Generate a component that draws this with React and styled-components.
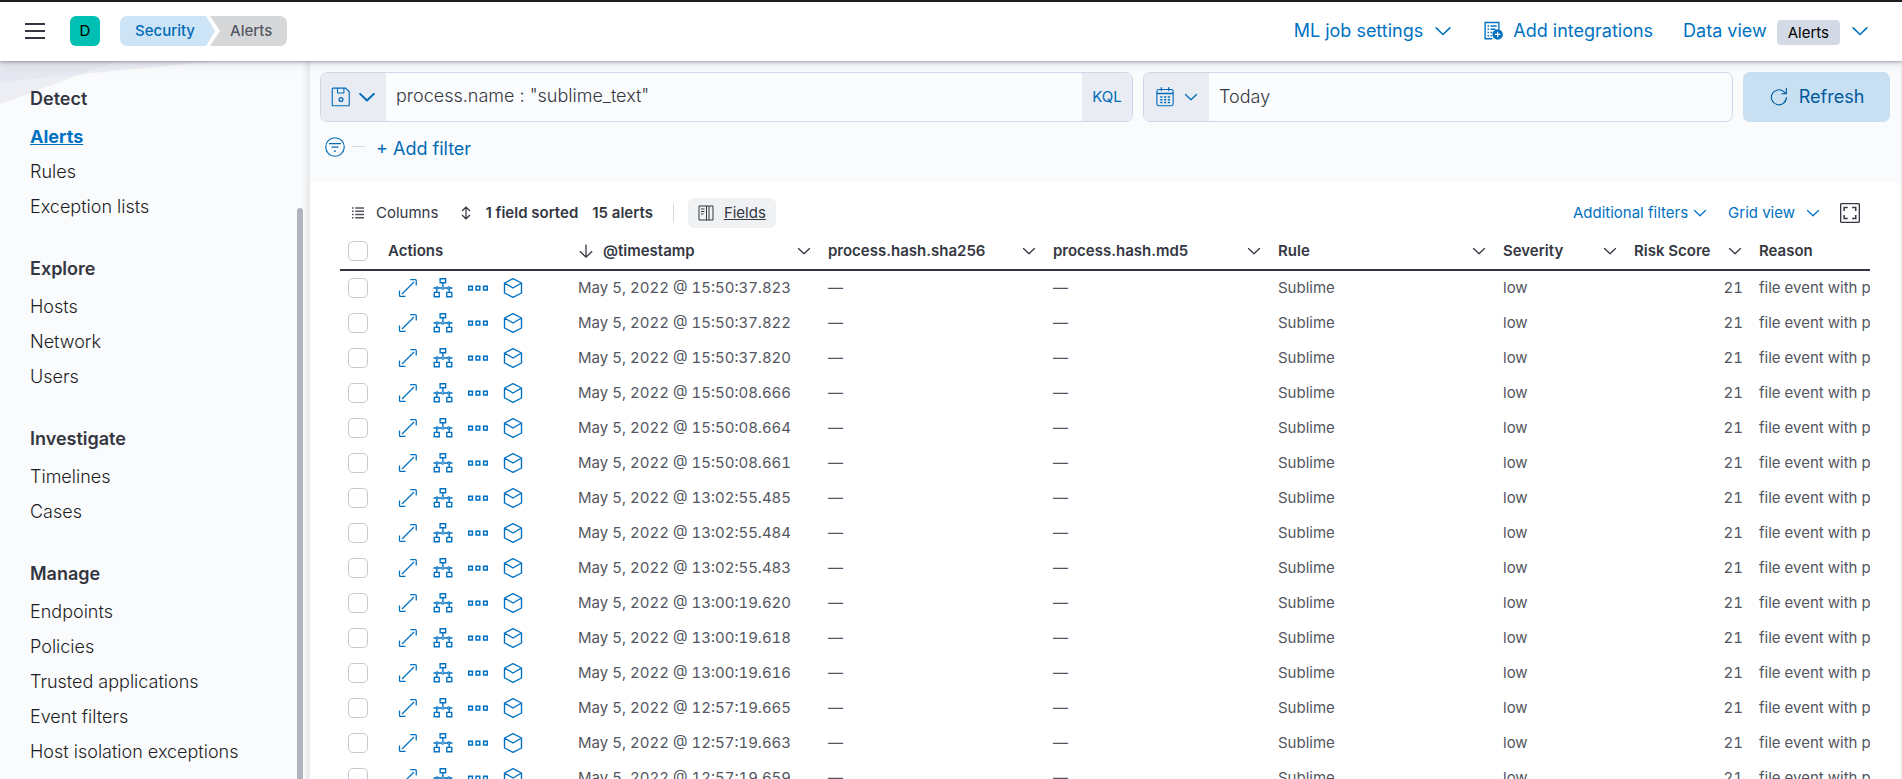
import React from "react";
import styled, { createGlobalStyle, css } from "styled-components";

const c = {
  text: "#343741",
  title: "#343741",
  soft: "#53565f",
  primary: "#0071c2",
  link: "#006bb8",
  pale: "#fafbfd",
  append: "#e9edf3",
  line: "#d3dae6",
};

const Global = createGlobalStyle`
  *, *::before, *::after { box-sizing: border-box; }
  body {
    margin: 0;
    background: #fff;
    color: ${c.text};
    font-family: Inter, "Liberation Sans", sans-serif;
    font-size: 15px;
    line-height: 20px;
  }
  button, input { font: inherit; color: inherit; margin: 0; padding: 0; border: 0; background: none; }
  button { cursor: pointer; }
  svg { display: block; flex: none; }
`;

/* ---------- icons ---------- */

const Svg = ({ size = 20, children, ...rest }) => (
  <svg width={size} height={size} viewBox="0 0 16 16" fill="none" stroke="currentColor" aria-hidden="true" {...rest}>
    {children}
  </svg>
);
const Chevron = ({ size = 20, bold }) => (
  <Svg size={size} strokeLinecap="round" strokeLinejoin="round" strokeWidth={bold ? 1.6 : 1.25}><path d="M2.5 5.5 8 10.8l5.500-5.300" /></Svg>
);
const SaveIcon = () => (
  <Svg><path d="M1.500.900h10.200l2.900 2.900v10.700a.5.5 0 0 1-.5.5H1.500a.5.5 0 0 1-.5-.5V1.400a.5.5 0 0 1 .5-.5ZM5.200 1v3.300a.5.5 0 0 0 .5.5h4.100a.5.5 0 0 0 .5-.5V1" strokeWidth=".9" /><circle cx="8" cy="10" r="1.500" strokeWidth="1.100" /></Svg>
);
const CalendarIcon = () => (
  <Svg>
    <rect x="1.500" y="2" width="13" height="13" rx="1.500" strokeWidth=".9" />
    <path d="M1.500 5.200h13" strokeWidth="1.100" />
    <path d="M5 .2v3M11 .2v3" />
    <path d="M4.200 8h7.800M4.200 10.200h7.800M4.200 12.400h7.800" strokeWidth="1.200" strokeDasharray="1.800 1.200" />
  </Svg>
);
const RefreshIcon = () => (
  <Svg strokeLinecap="round"><path d="M13.900 8.500A6 6 0 1 1 11.800 3.700L13.600 5.300M13.900 1v4.400H10.300" strokeWidth=".9" /></Svg>
);
const FilterIcon = () => (
  <Svg><circle cx="8" cy="8" r="7.400" strokeWidth=".9" /><path d="M3.200 5.300h9.600M5.200 8.100h5.600M7.200 11.200h1.600" strokeWidth="1" /></Svg>
);
const IntegrationIcon = () => (
  <Svg>
    <path d="M7.500 14.200H1.700V1.200h11V7" strokeWidth="1.100" />
    <path d="M3.600 4h1.200M6 4h5M3.600 6.600h1.200M6 6.600h4M3.600 9.200h1.200M3.600 11.800h1.200M6 9.200h1.400M6 11.800h1" strokeWidth="1.100" />
    <circle cx="11.700" cy="10.700" r="4.200" fill="currentColor" stroke="none" />
    <path d="M11.700 8.500v4.400M9.500 10.700h4.400" stroke="#fff" strokeWidth="1" />
  </Svg>
);
const ListIcon = () => (
  <Svg size={16}><path d="M2 3h1.600M2 6.200h1.600M2 9.500h1.600M2 12.700h1.600M5.200 3H14M5.200 6.200H14M5.200 9.500H14M5.200 12.700H14" strokeWidth="1.400" opacity=".85" /></Svg>
);
const SortIcon = () => (
  <Svg size={16}><path d="M8 2.500v11M4 6 8 2.200 12 6M4 10l4 3.800 4-3.800" strokeWidth="1.200" /></Svg>
);
const FieldsIcon = () => (
  <Svg size={16}><path d="M1 1h14v14H1zM8.500 1v14M11 1v14M3 4h3.500M3 6.500h3.500M3 9h2.500" strokeWidth="1" /></Svg>
);
const FullScreenIcon = () => (
  <Svg><rect x=".5" y=".5" width="15" height="15" rx="1" strokeWidth="1.100" /><path d="M3.300 6.300V3.600h2.900M9.700 3.600h2.900v2.700M12.600 9.600v2.700H9.700M6.200 12.300H3.300V9.600" strokeWidth="1.200" /></Svg>
);
const ArrowDown = () => (
  <Svg size={16}><path d="M8 1.500v12.500M1.800 8.300 8 14.200l6.200-5.900" strokeWidth="1.300" /></Svg>
);
const ExpandIcon = () => (
  <Svg><path d="M3.200 12.800 12.800 3.200M9.800 1.300h4.100a.7.7 0 0 1 .7.700v4M1.200 10v4a.7.7 0 0 0 .7.700H6" strokeWidth="1" /></Svg>
);
const AnalyzeIcon = () => (
  <Svg>
    <path d="M5.700.600h4.400v3.200H5.700zM1 11.500h4v3.500H1zM11 11.500h4v3.500h-4zM7.900 3.800v3M.4 8h1.900M4.100 8h2.600M9.100 8h2.600M13.500 8h2.100M3 9v2.500M13 9v2.500" strokeWidth="1.100" />
    <circle cx="3.200" cy="8" r=".9" strokeWidth=".9" /><circle cx="7.900" cy="8" r="1" strokeWidth=".9" /><circle cx="12.600" cy="8" r=".9" strokeWidth=".9" />
  </Svg>
);
const DotsIcon = () => (
  <Svg><path d="M.6 6.500h2.900v3.100H.6zM6.500 6.500h2.900v3.100H6.500zM12.500 6.500h2.900v3.100h-2.900z" strokeWidth="1.200" /></Svg>
);
const CubeIcon = () => (
  <Svg strokeLinejoin="round"><path d="M8 .5 14.800 4v8L8 15.500 1.200 12V4ZM1.200 4 8 8l6.800-4" strokeWidth="1.100" /></Svg>
);

/* ---------- shell ---------- */

const Page = styled.div`
  height: 100vh;
  min-width: 1200px;
  display: flex;
  flex-direction: column;
  overflow: hidden;
  border-top: 2px solid #1d1e24;
`;
const Header = styled.header`
  position: relative;
  z-index: 2;
  flex: none;
  height: 59px;
  padding: 0 32px 1px 25px;
  display: flex;
  align-items: center;
  justify-content: space-between;
  background: #fff;
  box-shadow: 0 1px 3px rgba(80, 85, 110, 0.5), 0 3px 10px rgba(60, 60, 60, 0.13);
`;
const HeaderSide = styled.div`
  display: flex;
  align-items: center;
`;
const MenuButton = styled.button`
  width: 20px;
  height: 16px;
  margin-right: 25px;
  display: flex;
  flex-direction: column;
  justify-content: space-between;
`;
const MenuBar = styled.span`
  width: 100%;
  height: 2px;
  background: ${c.text};
`;
const Space = styled.button`
  width: 30px;
  height: 30px;
  margin-right: 20px;
  border-radius: 6px;
  background: #00bfb3;
  color: #000;
`;
const Crumbs = styled.nav`
  display: flex;
`;
const Crumb = styled.a`
  height: 30px;
  line-height: 30px;
  text-decoration: none;
  font-weight: 500;
  ${(p) => p.$last ? css`
    margin-left: -5px;
    padding: 0 15px 0 20px;
    border-radius: 0 7px 7px 0;
    background: #d6d7d9;
    color: #535764;
    clip-path: polygon(0 0, 100% 0, 100% 100%, 0 100%, 10px 50%);
  ` : css`
    padding: 0 20px 0 15px;
    border-radius: 7px 0 0 7px;
    background: #cce4f5;
    color: ${c.link};
    clip-path: polygon(0 0, calc(100% - 9px) 0, 100% 50%, calc(100% - 9px) 100%, 0 100%);
  `}
`;
const HeaderAction = styled.button`
  display: flex;
  align-items: center;
  gap: 10px;
  margin-left: 30px;
  color: ${c.primary};
  font-size: 18px;
  line-height: 24px;
`;
const Badge = styled.span`
  height: 25px;
  margin-top: 2px;
  padding: 0 11px;
  border-radius: 4px;
  background: ${c.line};
  color: #000;
  font-size: 15px;
  line-height: 25px;
`;
const Body = styled.div`
  flex: 1;
  min-height: 0;
  display: flex;
  border-right: 2px solid #f1f2f4;
`;

/* ---------- side navigation ---------- */

const Side = styled.aside`
  position: relative;
  flex: none;
  width: 310px;
  padding: 20px 30px 0;
  overflow: hidden;
  background: linear-gradient(90deg, transparent 302px, #e6e8ea 310px), ${c.pale};
`;
const Backdrop = styled.svg`
  position: absolute;
  top: 0;
  left: 0;
`;
const Thumb = styled.div`
  position: absolute;
  top: 147px;
  bottom: 0;
  right: 7px;
  width: 6px;
  border-radius: 3px 3px 0 0;
  background: #b0b3be;
`;
const Group = styled.section`
  position: relative;
  margin-bottom: 27px;
`;
const GroupTitle = styled.h2`
  margin: 0 0 3px;
  font-size: 18px;
  font-weight: 600;
  line-height: 35px;
  color: ${c.title};
`;
const NavLink = styled.a`
  display: block;
  font-size: 18px;
  line-height: 35px;
  font-weight: ${(p) => (p.$active ? 700 : 300)};
  color: ${(p) => (p.$active ? c.primary : "#1d1e24")};
  text-decoration: ${(p) => (p.$active ? "underline" : "none")};
`;

/* ---------- query area ---------- */

const Main = styled.main`
  flex: 1;
  min-width: 0;
  overflow: hidden;
`;
const Query = styled.section`
  height: 121px;
  padding: 11px 10px 0;
  background: ${c.pale};
`;
const QueryRow = styled.div`
  display: flex;
  gap: 10px;
  height: 50px;
`;
const Field = styled.div`
  display: flex;
  flex: ${(p) => (p.$wide ? "1" : "0 0 590px")};
  min-width: 0;
  border: 1px solid #cfd7e8;
  border-radius: 7px;
  overflow: hidden;
  background: #fbfcfe;
`;
const FieldButton = styled.button`
  flex: none;
  width: ${(p) => p.$w}px;
  display: flex;
  align-items: center;
  justify-content: center;
  gap: ${(p) => p.$gap || 6}px;
  background: ${c.append};
  color: ${c.link};
`;
const QueryInput = styled.input`
  flex: 1;
  min-width: 0;
  padding: 0 10px 2px;
  font-size: 18px;
  font-weight: 300;
  outline: 0;
`;
const DateButton = styled.button`
  flex: 1;
  padding: 0 10px;
  text-align: left;
  font-size: 18px;
  font-weight: 300;
`;
const Refresh = styled.button`
  width: 147px;
  display: flex;
  align-items: center;
  justify-content: center;
  gap: 10px;
  border-radius: 7px;
  background: #c8e0f2;
  color: #005a9e;
  font-size: 18px;
`;
const FilterRow = styled.div`
  display: flex;
  align-items: flex-start;
  padding: 15px 5px 0;
  color: ${c.link};
`;
const Dash = styled.span`
  width: 13px;
  height: 1px;
  margin: 9px 11px 0 7px;
  background: ${c.line};
`;
const AddFilter = styled.button`
  font-size: 18px;
  line-height: 24px;
`;

/* ---------- alerts grid ---------- */

const Grid = styled.section`
  padding: 16px 30px 0;
`;
const Toolbar = styled.div`
  height: 30px;
  padding: 0 10px;
  display: flex;
  align-items: center;
  justify-content: space-between;
`;
const Tools = styled.div`
  display: flex;
  align-items: center;
`;
const Tool = styled.button`
  height: 30px;
  display: flex;
  align-items: center;
  gap: ${(p) => p.$gap || 10}px;
  margin-right: ${(p) => p.$after || 0}px;
  padding: 0 ${(p) => (p.$filled ? 10 : 0)}px;
  border-radius: 6px;
  background: ${(p) => (p.$filled ? "#f0f1f3" : "none")};
  color: ${(p) => (p.$blue ? c.primary : c.text)};
  font-weight: ${(p) => p.$weight || 400};
  text-decoration: ${(p) => (p.$filled ? "underline" : "none")};
`;
const Count = styled.strong`
  font-weight: 600;
`;
const Divider = styled.span`
  width: 1px;
  height: 19px;
  margin: 0 14px 0 20px;
  background: ${c.line};
`;
const Table = styled.table`
  width: 100%;
  table-layout: fixed;
  border-collapse: separate;
  border-spacing: 0;
`;
const Th = styled.th`
  height: 43px;
  width: ${(p) => (p.$w ? `${p.$w}px` : "auto")};
  padding: 4px 8px 0;
  border-bottom: 2px solid #343741;
  color: ${c.title};
  font-weight: 600;
  text-align: left;
`;
const HeadCell = styled.div`
  display: flex;
  align-items: center;
  justify-content: space-between;
`;
const HeadLabel = styled.span`
  display: flex;
  align-items: center;
  gap: 9px;
`;
const Td = styled.td`
  height: 35px;
  padding: 0 8px 1px;
  overflow: hidden;
  white-space: nowrap;
  text-overflow: clip;
  color: ${c.soft};
  text-align: ${(p) => (p.$right ? "right" : "left")};
  font-variant-numeric: tabular-nums;
`;
const Check = styled.input.attrs({ type: "checkbox" })`
  appearance: none;
  display: block;
  width: 20px;
  height: 20px;
  border: 1px solid #c5c8cf;
  border-radius: 5px;
  background: #fff;
`;
const Actions = styled.div`
  display: flex;
  gap: 15px;
  padding-left: 10px;
`;
const Action = styled.button`
  color: ${c.primary};
`;

const groups = [
  ["Detect", ["Alerts", "Rules", "Exception lists"]],
  ["Explore", ["Hosts", "Network", "Users"]],
  ["Investigate", ["Timelines", "Cases"]],
  ["Manage", ["Endpoints", "Policies", "Trusted applications", "Event filters", "Host isolation exceptions"]],
];
const columns = [
  ["@timestamp", 250], ["process.hash.sha256", 225], ["process.hash.md5", 225],
  ["Rule", 225], ["Severity", 131], ["Risk Score", 125], ["Reason", 0],
];
const times = [
  "15:50:37.823", "15:50:37.822", "15:50:37.820", "15:50:08.666", "15:50:08.664",
  "15:50:08.661", "13:02:55.485", "13:02:55.484", "13:02:55.483", "13:00:19.620",
  "13:00:19.618", "13:00:19.616", "12:57:19.665", "12:57:19.663", "12:57:19.659",
];
const actions = [["View details", ExpandIcon], ["Analyze event", AnalyzeIcon], ["More actions", DotsIcon], ["Session view", CubeIcon]];

export default function App() {
  return (
    <Page>
      <Global />
      <Header>
        <HeaderSide>
          <MenuButton aria-label="Toggle navigation"><MenuBar /><MenuBar /><MenuBar /></MenuButton>
          <Space aria-label="Default space">D</Space>
          <Crumbs aria-label="Breadcrumb">
            <Crumb href="#security">Security</Crumb>
            <Crumb href="#alerts" $last>Alerts</Crumb>
          </Crumbs>
        </HeaderSide>
        <HeaderSide>
          <HeaderAction>ML job settings <Chevron /></HeaderAction>
          <HeaderAction><IntegrationIcon /> Add integrations</HeaderAction>
          <HeaderAction>Data view <Badge>Alerts</Badge> <Chevron /></HeaderAction>
        </HeaderSide>
      </Header>
      <Body>
        <Side>
          <Backdrop width="216" height="44" viewBox="0 0 216 44" aria-hidden="true">
            <path d="M0 0h117L0 43Z" fill="#dfe2ec" fillOpacity=".5" />
            <path d="M0 0h215L0 21Z" fill="#dfe2ee" fillOpacity=".5" />
          </Backdrop>
          {groups.map(([title, items]) => (
            <Group key={title}>
              <GroupTitle>{title}</GroupTitle>
              {items.map((item) => (
                <NavLink key={item} href="#nav" $active={item === "Alerts"}>{item}</NavLink>
              ))}
            </Group>
          ))}
          <Thumb />
        </Side>
        <Main>
          <Query>
            <QueryRow>
              <Field $wide>
                <FieldButton $w={65} aria-label="Saved queries"><SaveIcon /><Chevron bold /></FieldButton>
                <QueryInput aria-label="Search query" defaultValue={'process.name : "sublime_text"'} />
                <FieldButton $w={50}>KQL</FieldButton>
              </Field>
              <Field>
                <FieldButton $w={65} $gap={8} aria-label="Quick date select"><CalendarIcon /><Chevron size={16} /></FieldButton>
                <DateButton>Today</DateButton>
              </Field>
              <Refresh><RefreshIcon /> Refresh</Refresh>
            </QueryRow>
            <FilterRow>
              <FilterIcon />
              <Dash />
              <AddFilter>+ Add filter</AddFilter>
            </FilterRow>
          </Query>
          <Grid>
            <Toolbar>
              <Tools>
                <Tool $after={20}><ListIcon /> Columns</Tool>
                <Tool $after={14} $gap={11} $weight={600}><SortIcon /> 1 field sorted</Tool>
                <Count>15 alerts</Count>
                <Divider />
                <Tool $filled><FieldsIcon /> Fields</Tool>
              </Tools>
              <Tools>
                <Tool $blue $gap={4} $after={20}>Additional filters <Chevron size={16} /></Tool>
                <Tool $blue $after={19}>Grid view <Chevron size={16} /></Tool>
                <Tool aria-label="Full screen"><FullScreenIcon /></Tool>
              </Tools>
            </Toolbar>
            <Table>
              <thead>
                <tr>
                  <Th $w={40}><Check aria-label="Select all alerts" /></Th>
                  <Th $w={190}>Actions</Th>
                  {columns.map(([name, width], i) => (
                    <Th key={name} $w={width}>
                      <HeadCell>
                        <HeadLabel>{i === 0 && <ArrowDown />}{name}</HeadLabel>
                        {width > 0 && <Chevron size={16} />}
                      </HeadCell>
                    </Th>
                  ))}
                </tr>
              </thead>
              <tbody>
                {times.map((time) => (
                  <tr key={time}>
                    <Td><Check aria-label={`Select alert ${time}`} /></Td>
                    <Td>
                      <Actions>
                        {actions.map(([label, Icon]) => (
                          <Action key={label} aria-label={label}><Icon /></Action>
                        ))}
                      </Actions>
                    </Td>
                    <Td>May 5, 2022 @ {time}</Td>
                    <Td>—</Td>
                    <Td>—</Td>
                    <Td>Sublime</Td>
                    <Td>low</Td>
                    <Td $right>21</Td>
                    <Td>file event with process</Td>
                  </tr>
                ))}
              </tbody>
            </Table>
          </Grid>
        </Main>
      </Body>
    </Page>
  );
}
